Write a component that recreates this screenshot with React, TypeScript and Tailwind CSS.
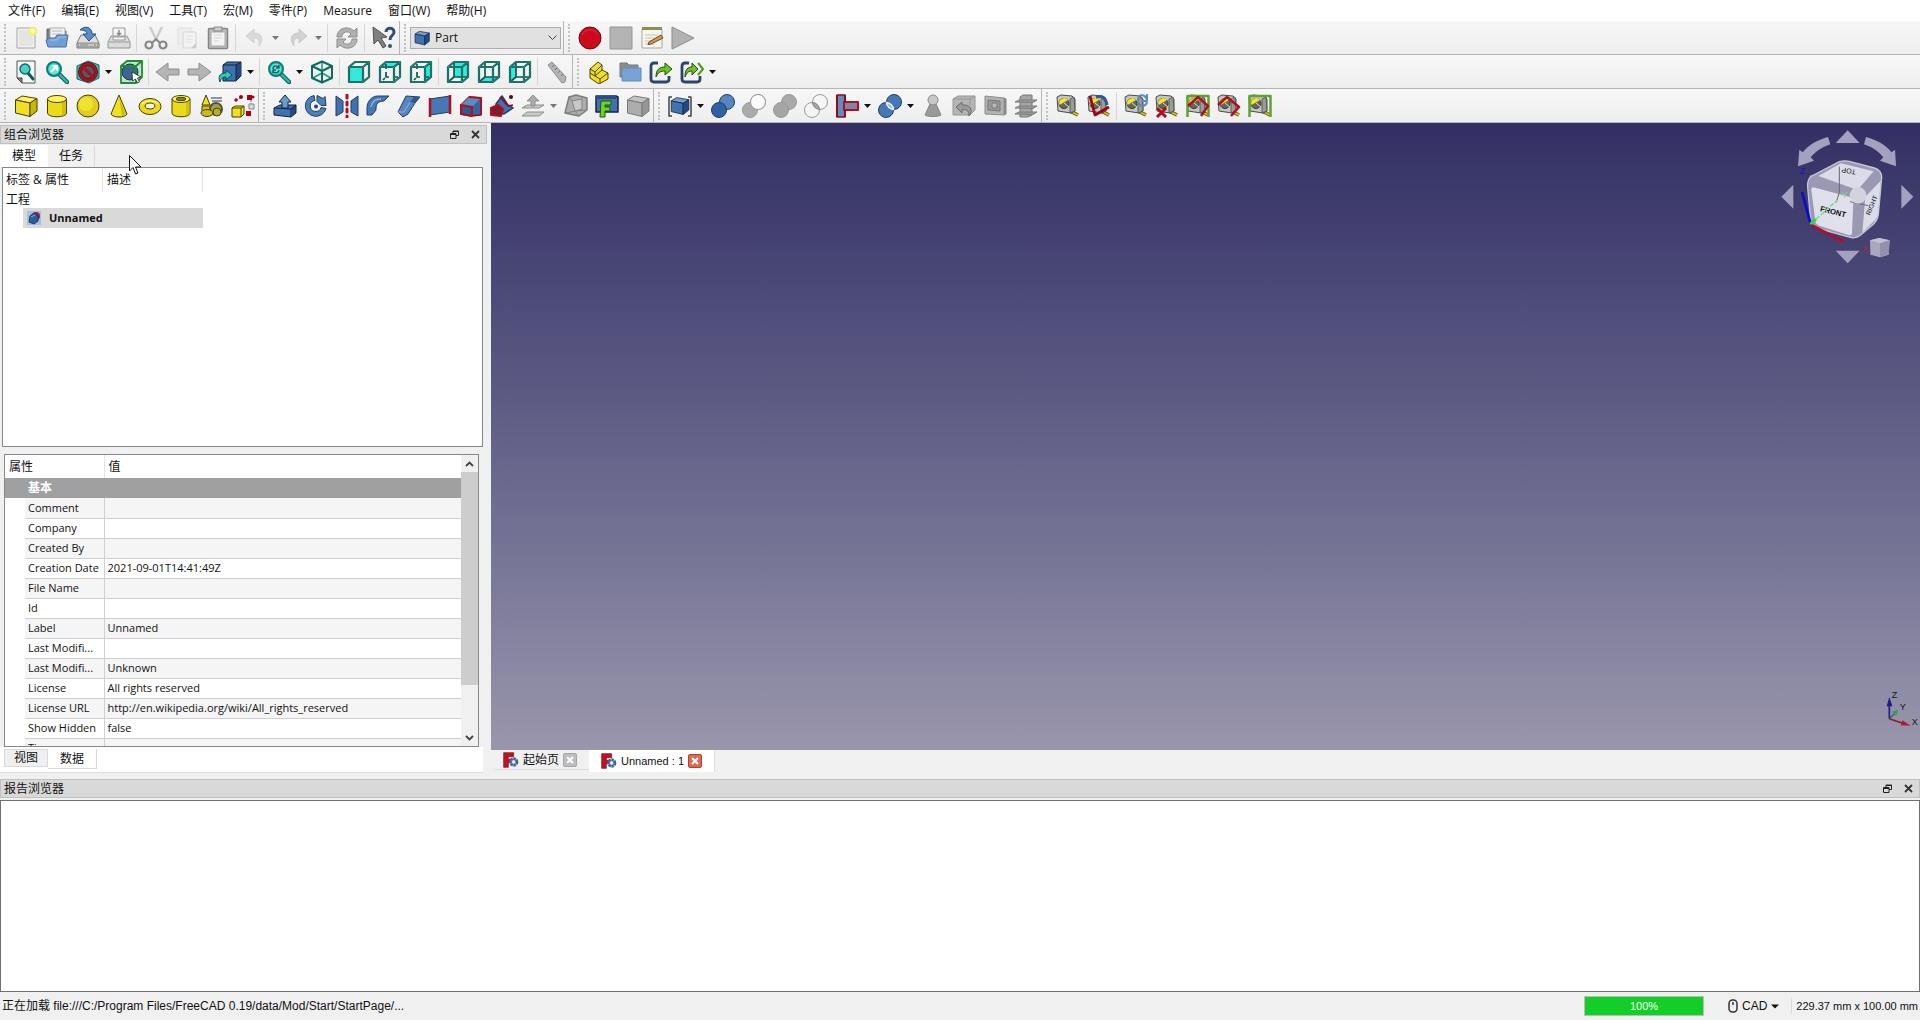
import type { ReactNode } from "react";

const BLUE = { top: "#729fcf", left: "#3f72ae", right: "#204a87", line: "#14253c" };
const YELLOW = { top: "#fff35c", left: "#efe025", right: "#c9b700", line: "#4a4200" };
const GRAY = { top: "#c4c4c4", left: "#adadad", right: "#969696", line: "#7a7a7a" };
type Palette = typeof BLUE;

function Icon({ children, size = 24 }: { children: ReactNode; size?: number }) {
  return (
    <svg aria-hidden="true" width={size} height={size} viewBox="0 0 24 24" fill="none" strokeLinejoin="round">
      {children}
    </svg>
  );
}

function Box({ c }: { c: Palette }) {
  return (
    <g stroke={c.line}>
      <path d="M1.500 6 8 2l15 2.500-7 4.500z" fill={c.top} />
      <path d="M1.500 6 16 9v13.500L1.500 19z" fill={c.left} />
      <path d="M16 9 23 4.500V17l-7 5.500z" fill={c.right} />
    </g>
  );
}

const viewFaces = {
  front: "M2 7h14v15H2z",
  top: "M2 7l6-5h14l-6 5z",
  right: "M16 7l6-5v15l-6 5z",
  rear: "M8 2h14v15H8z",
  bottom: "M2 22l6-5h14l-6 5z",
  left: "M2 7l6-5v15l-6 5z",
};

function ViewCube({ face }: { face: keyof typeof viewFaces }) {
  const front = face === "front" || face === "top" || face === "right";
  return (
    <Icon>
      <path d={viewFaces[face]} fill="#34e8dc" />
      {face !== "front" && (
        <path
          d={front ? "M8 4v5M8 12v5h3M15 17h5M7 18l-2 2" : "M8 2v15h14M8 17l-6 5"}
          stroke="#0c5a52"
          strokeWidth="1.700"
        />
      )}
      <path d="M2 7l6-5h14v15l-6 5H2zM2 7h14v15M16 7l6-5" stroke="#0c5a52" strokeWidth="2.200" />
      <path d="M2 7l6-5h14v15l-6 5H2zM2 7h14v15M16 7l6-5" stroke="#35a392" strokeWidth=".700" />
    </Icon>
  );
}

function Magnifier({ children }: { children?: ReactNode }) {
  return (
    <>
      <path d="M13 13l9 9" stroke="#0b4f4b" strokeWidth="4.500" strokeLinecap="round" />
      <path d="M14 14l8 8" stroke="#22b8b0" strokeWidth="2.500" strokeLinecap="round" />
      <circle cx="9" cy="9" r="7" fill="#3ad0c6" stroke="#0b7d76" strokeWidth="2" />
      <circle cx="9" cy="9" r="5" fill="#6fe3dc" />
      {children}
    </>
  );
}

function Tape() {
  return (
    <>
      <path d="M14 17l8 4" stroke="#5b5200" strokeWidth="3.500" />
      <path d="M14 17l8 4" stroke="#d8ca1e" strokeWidth="1.800" />
      <path d="M1 3l4-2 11 1 3 3v12l-4 2-13-2z" fill="#c4c6bf" stroke="#4a4c48" />
      <path d="M14 5l4-2 1 14-5 2z" fill="#9a9c96" stroke="#4a4c48" strokeWidth=".8" />
      <circle cx="8" cy="9.500" r="5" fill="#66685f" stroke="#33342f" />
      <path d="M3.500 11a5 5 0 0 1 8.500-5z" fill="#f4e626" />
      <path d="M8 9l5 4" stroke="#ddd" />
    </>
  );
}

function Balls({ a, b, line }: { a: string; b: string; line: string }) {
  return (
    <g stroke={line}>
      <circle cx="16" cy="8" r="7.500" fill={b} />
      <circle cx="8" cy="16" r="7.500" fill={a} />
    </g>
  );
}

const newIcon = (
  <Icon>
    <path d="M3 2h18v20H3z" fill="#f1f1ef" stroke="#a6a6a2" />
    <path d="M5 4h14v16H5z" fill="#e4e4e1" />
    <circle cx="19" cy="5" r="4.500" fill="#fdf84a" opacity=".75" />
    <circle cx="19" cy="5" r="2" fill="#fffde0" />
  </Icon>
);
const openIcon = (
  <Icon>
    <path d="M2 3h6l2 2h11v8H2z" fill="#7c7e7b" stroke="#666" />
    <path d="M5 2h15v11H5z" fill="#f2f2f2" stroke="#aaa" />
    <path d="M7 5h10M7 8h10" stroke="#bbb" />
    <path d="M3 21 1 14l3-2h6l2-3h11l-2 12z" fill="#6f9fd4" stroke="#426fa5" />
    <path d="M5 14h7l2-3h7" stroke="#a5c5e8" />
  </Icon>
);
const saveIcon = (
  <Icon>
    <path d="M5 9h14l4 8v5H1v-5z" fill="#dededc" stroke="#777" />
    <path d="M2 17h20v4H2z" fill="#c5c5c3" stroke="#888" />
    <path d="M4 19h8M18 19h2" stroke="#888" />
    <path d="M4 4c5-5 12-3 12 4h4l-7 7-6-7h4c0-3-3-4-7-4z" fill="#5b8cc4" stroke="#245086" />
  </Icon>
);
const printIcon = (
  <Icon>
    <path d="M6 2h12v11H6z" fill="#f4f4f4" stroke="#999" />
    <path d="M12 4v4M10 7l2 2 2-2" stroke="#888" strokeWidth="1.500" />
    <path d="M4 10h16l3 6v6H1v-6z" fill="#dadada" stroke="#969696" />
    <path d="M2 16h20M6 11h12v3H6z" fill="#f5f5f5" stroke="#999" />
  </Icon>
);
const cutIcon = (
  <Icon>
    <path d="M6 1l7 14M18 1l-7 14" stroke="#cdcdcd" strokeWidth="2.500" />
    <ellipse cx="5" cy="19" rx="3.500" ry="3.500" stroke="#888" strokeWidth="2.200" />
    <ellipse cx="19" cy="19" rx="3.500" ry="3.500" stroke="#888" strokeWidth="2.200" />
    <path d="M8 17l4-4 4 4" stroke="#888" strokeWidth="2" />
  </Icon>
);
const copyIcon = (
  <Icon>
    <path d="M3 2h14v16H3z" fill="#eee" stroke="#e0e0e0" />
    <path d="M8 6h13v16H8z" fill="#f3f3f3" stroke="#d5d5d5" />
    <path d="M11 10h7M11 13h7M11 16h5" stroke="#e0e0e0" />
    <path d="M16 22l5-5v5z" fill="#ccc" />
  </Icon>
);
const pasteIcon = (
  <Icon>
    <rect x="2.500" y="2.500" width="19" height="20" rx="1" fill="#bdbdbd" stroke="#858585" strokeWidth="1.500" />
    <path d="M5 6h14v14H5z" fill="#f3f3f3" stroke="#aaa" />
    <path d="M8 1h8v4H8z" fill="#ccc" stroke="#888" />
    <path d="M8 9h8M8 12h8M8 15h5" stroke="#d4d4d4" />
  </Icon>
);
const undoPath = "M3 10l8-7v4c8 0 10 6 5 13 1-6-1-8-5-8v5z";
const undoIcon = (
  <Icon>
    <path d={undoPath} fill="#dadada" stroke="#d0d0d0" />
  </Icon>
);
const redoIcon = (
  <Icon>
    <path d={undoPath} fill="#d2d2d2" stroke="#c8c8c8" transform="matrix(-1 0 0 1 24 0)" />
  </Icon>
);
const refreshIcon = (
  <Icon>
    <path d="M2 11C2 2 13-1 19 5l3-3v9h-9l3-3C13 4 7 6 7 11z" fill="#b0b0b0" stroke="#8c8c8c" />
    <path d="M22 13c0 9-11 12-17 6l-3 3v-9h9l-3 3c3 4 9 2 9-3z" fill="#b5b5b5" stroke="#8c8c8c" />
  </Icon>
);
const whatsThisIcon = (
  <Icon>
    <path d="M1 1l14 10-6 1 5 8-3 2-5-8-4 4z" fill="#808080" stroke="#505050" />
    <path d="M14 6c0-5 8-5 8 0 0 4-4 3-4 8" stroke="#34506f" strokeWidth="3" />
    <circle cx="18" cy="20" r="2" fill="#34506f" />
  </Icon>
);
const recordIcon = (
  <Icon>
    <circle cx="12" cy="12" r="11" fill="#cc0a1e" stroke="#6d0913" />
    <path d="M4 9c3-7 13-7 16 0" stroke="#d9202f" strokeWidth="1.500" />
  </Icon>
);
const stopIcon = (
  <Icon>
    <path d="M1 1h22v22H1z" fill="#b4b4b4" stroke="#959595" />
  </Icon>
);
const editIcon = (
  <Icon>
    <path d="M2 3h20v19H2z" fill="#f6f5ee" stroke="#a9a896" />
    <path d="M2 1h20v3H2z" fill="#8f8a4f" />
    <path d="M5 9h13M5 12h10M5 15h7M5 18h9" stroke="#c3c3bb" />
    <path d="M9 16l12-7 2 3-12 6-3 .500z" fill="#d79a55" stroke="#6a4726" />
  </Icon>
);
const playIcon = (
  <Icon>
    <path d="M1 1l22 11L1 23z" fill="#b2b2b2" stroke="#8b8b8b" />
  </Icon>
);

const fitAllIcon = (
  <Icon>
    <path d="M3 1h18v22H8l-5-5z" fill="#f7f7f7" stroke="#555" />
    <path d="M3 18h5v5z" fill="#888" stroke="#444" />
    <path d="M14 13l5 6" stroke="#0b5f5a" strokeWidth="3" strokeLinecap="round" />
    <circle cx="11" cy="9" r="5" fill="#48d3ca" stroke="#0b6d67" strokeWidth="1.500" />
  </Icon>
);
const fitSelectionIcon = (
  <Icon>
    <Magnifier>
      <path d="M6 12l5-5M7.500 6H12v4.500" stroke="#fff" strokeWidth="2" />
    </Magnifier>
  </Icon>
);
const drawStyleIcon = (
  <Icon>
    <path d="M1 6l11-5 11 4v13l-10 5-12-4z" fill="#35bdb5" stroke="#0b6d67" />
    <circle cx="12" cy="12" r="8" fill="#4f5b5b" stroke="#6d0913" strokeWidth="4" />
    <circle cx="12" cy="12" r="8" stroke="#a91020" strokeWidth="2.500" />
    <path d="M6.500 6.500l11 11" stroke="#a91020" strokeWidth="3" />
  </Icon>
);
const boundingIcon = (
  <Icon>
    <path d="M2 6l6-5h15v16l-6 6H2z" fill="#c6e0d6" />
    <circle cx="11" cy="12" r="8" fill="#3d6492" stroke="#1b3554" />
    <path d="M2 6h15v17H2zM2 6l6-5h15l-6 5M23 1v16l-6 6" stroke="#1b8f2b" strokeWidth="1.800" />
    <path d="M13 12l9 5-3.500 1 2 4-2 1-2-4-3 2z" fill="#fff" stroke="#222" strokeWidth=".8" />
  </Icon>
);
const arrowD = "M0 12L12 3v6h11v6H12v6z";
const backIcon = (
  <Icon>
    <path d={arrowD} fill="#b5b5b5" stroke="#8d8d8d" />
  </Icon>
);
const forwardIcon = (
  <Icon>
    <path d={arrowD} fill="#b5b5b5" stroke="#8d8d8d" transform="rotate(180 12 12)" />
  </Icon>
);
const linkGoIcon = (
  <Icon>
    <path d="M5 5l4-3h14v14l-5 5H5z" fill="#3f72ae" stroke="#13233a" />
    <path d="M18 5l5-3v14l-5 5z" fill="#234a80" />
    <path d="M5 5h13v15M18 5l5-3" stroke="#13233a" />
    <path d="M2 22c-3-7 2-9 6-9v-3l6 5-6 5v-3c-3 0-5 1-6 5z" fill="#35c8c0" stroke="#0c4f4b" />
  </Icon>
);
const syncViewIcon = (
  <Icon>
    <Magnifier>
      <path d="M6 9c0-4 5-4 6-1M12 5v3H9M12 10c0 3-5 4-6 1M6 13v-3h3" stroke="#0d6660" strokeWidth="1.400" />
    </Magnifier>
  </Icon>
);
const isoIcon = (
  <Icon>
    <path d="M12 1.500 22 6v12l-10 4.500L2 18V6z" fill="#e8f4f2" />
    <path d="M12 2v11M12 13l-9 5M12 13l9 5" stroke="#2f8f83" strokeWidth="1.500" />
    <path d="M12 1.500 22 6v12l-10 4.500L2 18V6zM2 6l10 5 10-5M12 11v11" stroke="#0f6a60" strokeWidth="2" />
  </Icon>
);
const rulerIcon = (
  <Icon>
    <path d="M3 5l4-3 14 15-1 5-3 1z" fill="#b3b3b3" stroke="#8c8c8c" />
    <path d="M9 5L7 7M12 8l-2 2M15 11l-2 2M18 14l-2 2" stroke="#777" />
  </Icon>
);
const partIcon = (
  <Icon>
    <path d="M3 9l8-7 4 3v5l6 3v6l-9 5-9-6z" fill="#efe121" stroke="#4a4200" />
    <path d="M3 9l5 3 7-7M8 12v4l5 3 8-6M3 13l5 3M13 19v4M8 16l7-6" stroke="#4a4200" />
  </Icon>
);
const groupIcon = (
  <Icon>
    <path d="M2 3h7l2 2h9v12H2z" fill="#8c8e8b" stroke="#777" />
    <path d="M4 8h19v13H4z" fill="#78a3d6" stroke="#5f8cc0" />
  </Icon>
);
const linkBox = <path d="M9 3H5C3 3 2 4 2 6v13c0 2 1 3 3 3h12c2 0 3-1 3-3v-3" stroke="#2b4668" strokeWidth="2.800" />;
const linkIcon = (
  <Icon>
    {linkBox}
    <path d="M7 17c0-8 4-10 9-10V3l7 6-7 6v-4c-4 0-7 1-9 6z" fill="#6cc225" stroke="#234f08" />
  </Icon>
);
const linkMoreIcon = (
  <Icon>
    {linkBox}
    <path d="M5 17c0-8 3-10 7-10V3l6 6-6 6v-4c-3 0-5 1-7 6z" fill="#6cc225" stroke="#234f08" />
    <path d="M18 3l5 6-5 6" stroke="#4b9c17" strokeWidth="2" />
  </Icon>
);

const cylinderIcon = (
  <Icon>
    <path d="M2.500 5v14c0 5 19 5 19 0V5" fill="#e9da1c" stroke="#4a4200" />
    <path d="M17 8v14l4-2V6z" fill="#c4b000" opacity=".6" />
    <ellipse cx="12" cy="5" rx="9.500" ry="3.500" fill="#fff35c" stroke="#4a4200" />
  </Icon>
);
const sphereIcon = (
  <Icon>
    <circle cx="12" cy="12" r="11" fill="#dfcf1c" stroke="#4a4200" />
    <circle cx="10" cy="10" r="7" fill="#f8ea3c" opacity=".7" />
  </Icon>
);
const coneIcon = (
  <Icon>
    <path d="M12 1l8 19c-2 4-14 4-16 0z" fill="#efe121" stroke="#4a4200" />
    <path d="M12 3l7 17-4 2z" fill="#b8a600" opacity=".6" />
  </Icon>
);
const torusIcon = (
  <Icon>
    <ellipse cx="12" cy="12.500" rx="11" ry="8" fill="#e9da1c" stroke="#4a4200" />
    <ellipse cx="12" cy="12" rx="5" ry="3" fill="#f2f2f2" stroke="#4a4200" />
    <path d="M4 10c3-4 13-4 16 0" stroke="#fff67e" strokeWidth="1.500" />
  </Icon>
);
const tubeIcon = (
  <Icon>
    <path d="M3 5v14c0 5 18 5 18 0V5" fill="#e9da1c" stroke="#4a4200" />
    <path d="M17 8v14l4-2V6z" fill="#c4b000" opacity=".6" />
    <ellipse cx="12" cy="5" rx="9" ry="3.500" fill="#fff35c" stroke="#4a4200" />
    <ellipse cx="12" cy="5" rx="5" ry="1.700" fill="#8d7f00" stroke="#4a4200" />
  </Icon>
);
const primitivesIcon = (
  <Icon>
    <path d="M6 1l4 10H2z" fill="#efe121" stroke="#4a4200" />
    <path d="M11 4h11M12 7h10" stroke="#8b95a3" strokeWidth="2" />
    <path d="M2 12h10v8H2z" fill="#d3c41a" stroke="#4a4200" />
    <circle cx="16" cy="15" r="6" fill="#a7a04a" stroke="#55542a" strokeWidth="2" />
    <ellipse cx="7" cy="19" rx="6" ry="3.500" fill="#c9bb1c" stroke="#4a4200" />
    <circle cx="17" cy="18" r="4" fill="#b5ab3a" stroke="#4a4200" />
  </Icon>
);
const shapeBuilderIcon = (
  <Icon>
    <path d="M1 14l3-2h9v8l-3 3H1z" fill="#efe121" stroke="#4a4200" />
    <path d="M1 14h9v9M10 14l3-2" stroke="#4a4200" />
    <path d="M5 6l6-3M16 3h6M20 6v8M15 18l5 2" stroke="#777" strokeDasharray="2 1" />
    <g fill="#a40010">
      <circle cx="5" cy="6" r="1.700" />
      <circle cx="10" cy="3" r="2" />
      <path d="M16 1h5v5h-5zM15 17h5v5h-5z" />
      <circle cx="22" cy="3" r="1.500" />
    </g>
    <path d="M18 10h5v5h-5z" fill="#ddd" stroke="#888" />
  </Icon>
);
const extrudeIcon = (
  <Icon>
    <path d="M1 14l6-3h16l-5 4v8L1 21z" fill="#3f72ae" stroke="#14253c" />
    <path d="M18 15l5-4v8l-5 4z" fill="#234a80" />
    <path d="M1 14l17 1 5-4v8l-5 4" stroke="#14253c" />
    <path d="M12 1l6 7h-3v6H9V8H6z" fill="#6b9acf" stroke="#14253c" />
  </Icon>
);
const revolveIcon = (
  <Icon>
    <path d="M10 1.500a10.500 10.500 0 1 0 12 13l-5-1a5.500 5.500 0 1 1-6-7z" fill="#4d7fb9" stroke="#203e66" />
    <path d="M13 1.500l6 3 2-2 1 9h-5l-4-4z" fill="#4d7fb9" stroke="#203e66" />
    <circle cx="12" cy="12.500" r="2" fill="#28456b" />
  </Icon>
);
const mirrorIcon = (
  <Icon>
    <path d="M1 2l7 5v11l-7 4zM23 2l-7 5v11l7 4z" fill="#3f72ae" stroke="#203e66" />
    <path d="M12 1v24" stroke="#b0101e" strokeWidth="3" strokeDasharray="3 4" strokeLinecap="round" />
  </Icon>
);
const filletIcon = (
  <Icon>
    <path d="M1 21v-7C1 7 6 2 12 2h11l-5 5c-6 0-8 3-8 8v1l-4 5z" fill="#4578b4" stroke="#203e66" />
    <path d="M5 13c1-6 5-8 10-8" stroke="#8eb4de" strokeWidth="1.500" />
  </Icon>
);
const chamferIcon = (
  <Icon>
    <path d="M1 18 9 2l14 1-5 6-7 11-5 3z" fill="#5586c0" stroke="#203e66" />
    <path d="M13 8l4-5 6 0-5 6z" fill="#31598f" />
    <path d="M1 18h6l6-10" stroke="#8eb4de" />
  </Icon>
);
const ruledIcon = (
  <Icon>
    <path d="M2 5l20-3v16L2 21z" fill="#4578b4" stroke="#203e66" />
    <path d="M2 4v19M22 1v19" stroke="#b0101e" strokeWidth="2.500" />
  </Icon>
);
const loftIcon = (
  <Icon>
    <path d="M2 11l8-8 12 1v17l-10 1-10-2z" fill="#3465a4" stroke="#8f0c19" strokeWidth="1.500" />
    <path d="M10 3l11 2-8 8-11-2z" fill="#5b8cc4" />
    <path d="M2 11l11 2v9l-11-2z" fill="#31598f" stroke="#b0101e" strokeWidth="2" />
    <path d="M10 3l12 1v17" stroke="#b0101e" strokeWidth="2" />
  </Icon>
);
const sweepIcon = (
  <Icon>
    <path d="M6 10l6-8 6 9 5 3-9 6-9-2z" fill="#3f72ae" stroke="#203e66" strokeWidth="1.500" />
    <path d="M1 14l7-3 5 4-2 7-10-1z" fill="#7e1c33" stroke="#b0101e" strokeWidth="2" />
    <circle cx="21" cy="3" r="2" fill="#4d0a12" />
    <path d="M10 3l8 9 5-1" stroke="#a40010" strokeWidth="1.500" />
  </Icon>
);
const offsetIcon = (
  <Icon>
    <path d="M1 22l5-4h17l-5 4zM1 14l5-3h17l-5 3z" fill="#c9c9c9" stroke="#8f8f8f" />
    <path d="M12 1l6 6h-4v5h-4V7H6z" fill="#acacac" stroke="#8f8f8f" />
  </Icon>
);
const thicknessIcon = (
  <Icon>
    <path d="M1 19 5 3l7-2 11 3v12l-8 6z" fill="#adadad" stroke="#7c7c7c" strokeWidth="1.500" />
    <path d="M8 7l10-2v10l-7 2z" fill="#c8c8c8" stroke="#838383" />
    <path d="M2 19l9-2 4 5M11 17l11-1M5 3l3 4" stroke="#838383" />
  </Icon>
);
const projectionIcon = (
  <Icon>
    <path d="M1 2h20l2 1v15H1z" fill="#3f72ae" stroke="#14253c" strokeWidth="1.500" />
    <path d="M1 2h20v3H1z" fill="#284f85" />
    <path d="M6 7h10v4h-6v2h5v4h-5v6H5z" fill="#6cd327" stroke="#245408" />
  </Icon>
);
const compoundIcon = (
  <Icon>
    <g transform="translate(2 2) scale(.82)">
      <Box c={BLUE} />
    </g>
    <path d="M4 3H1v19h3M20 3h3v19h-3" stroke="#444" strokeWidth="1.500" />
  </Icon>
);
const lens = "M8.500 8.500a7.500 7.500 0 0 1 7 7a7.500 7.500 0 0 1-7-7z";
const intersectionIcon = (
  <Icon>
    <circle cx="16" cy="8" r="7.500" stroke="#999" fill="#f6f6f6" />
    <circle cx="8" cy="16" r="7.500" stroke="#999" fill="#f6f6f6" fillOpacity=".6" />
    <path d={lens} fill="#a5a5a5" stroke="#888" />
  </Icon>
);
const joinIcon = (
  <Icon>
    <path d="M2 1h8v22H2z" fill="#5f8dbd" stroke="#8f0c19" strokeWidth="1.500" />
    <path d="M9 8h14v8H9z" fill="#7b88a8" stroke="#b0101e" strokeWidth="2" />
    <path d="M2 1v22M10 1v7M10 16v7" stroke="#8f0c19" strokeWidth="2" />
  </Icon>
);
const splitIcon = (
  <Icon>
    <Balls a="#4578b4" b="#4578b4" line="#203e66" />
    <path d={lens} fill="#9dbde0" stroke="#eef" strokeWidth="1.500" />
  </Icon>
);
const checkGeometryIcon = (
  <Icon>
    <path d="M9 10h6l5 11c-3 2-13 2-16 0z" fill="#999" stroke="#868686" />
    <circle cx="12" cy="6" r="5" fill="#c8c8c8" stroke="#8b8b8b" />
  </Icon>
);
const defeatureIcon = (
  <Icon>
    <path d="M1 5l5-3h17v14l-5 5H1z" fill="#b5b5b5" stroke="#959595" />
    <path d="M1 5h17v6M18 5l5-3" stroke="#959595" />
    <path d="M4 13l6-5v3c8-1 12 5 7 11 0-6-3-7-7-6v3z" fill="#9a9a9a" stroke="#6b6b6b" />
  </Icon>
);
const sectionIcon = (
  <Icon>
    <path d="M2 2l19 2v17L2 20z" fill="#b3b3b3" stroke="#8c8c8c" />
    <path d="M5 6l12 1v10L5 16z" fill="#999" stroke="#777" />
    <path d="M9 9h5v5H9z" fill="#b9b9b9" stroke="#777" />
    <path d="M21 4l2 1v15l-2 1" fill="#8c8c8c" stroke="#868686" />
  </Icon>
);
const crossSectionsIcon = (
  <Icon>
    <path d="M6 3l3-2h9v20l-4 2H6z" fill="#a5a5a5" stroke="#777" />
    <path d="M1 8l4-2h18l-4 2.500zM1 14l4-2h18l-4 2.500zM1 20l4-2h18l-4 2.500z" fill="#9b9b9b" stroke="#7c7c7c" />
  </Icon>
);
const measureAngularIcon = (
  <Icon>
    <Tape />
    <path d="M9 3c7-2 10 2 11 8" stroke="#2c5a94" strokeWidth="3" />
    <path d="M3 2l5 19 14-8" stroke="#a40010" strokeWidth="2.800" />
  </Icon>
);
const measureRefreshIcon = (
  <Icon>
    <Tape />
    <path d="M14 6c0-6 6-6 8-2l1-3v6h-5M23 8c-1 5-7 5-9 1" stroke="#5c88bd" strokeWidth="2" />
  </Icon>
);
const measureClearIcon = (
  <Icon>
    <Tape />
    <path d="M2 14l9 9M11 14l-9 9" stroke="#b0101e" strokeWidth="3" />
  </Icon>
);
const measureAllIcon = (
  <Icon>
    <Tape />
    <path d="M1.500 23V2h21v21" stroke="#5fa32c" strokeWidth="2.500" />
    <path d="M2 12 12 3l10 9-7 10" stroke="#b0101e" strokeWidth="2.500" />
  </Icon>
);
const measure3dIcon = (
  <Icon>
    <Tape />
    <path d="M1 11 10 3l12 10-8 9" stroke="#b0101e" strokeWidth="2.500" />
  </Icon>
);
const measureDeltaIcon = (
  <Icon>
    <Tape />
    <path d="M1.500 23V2h21v21" stroke="#5fa32c" strokeWidth="2.500" />
  </Icon>
);
const freecadIcon = (
  <Icon size={16}>
    <path d="M1 1h15v6H8v4h6v5H8v7H1z" fill="#c4101f" stroke="#7d0a16" />
    <circle cx="16" cy="15" r="5" fill="#6f9bcf" stroke="#3d6597" strokeWidth="4" strokeDasharray="3.500 1" />
    <circle cx="16" cy="15" r="2.500" fill="#eef" />
  </Icon>
);

type Tool = { icon: ReactNode; label: string; menu?: boolean; off?: boolean } | "sep";

const fileTools: Tool[] = [
  { icon: newIcon, label: "New" },
  { icon: openIcon, label: "Open" },
  { icon: saveIcon, label: "Save" },
  { icon: printIcon, label: "Print" },
  "sep",
  { icon: cutIcon, label: "Cut" },
  { icon: copyIcon, label: "Copy" },
  { icon: pasteIcon, label: "Paste" },
  "sep",
  { icon: undoIcon, label: "Undo", menu: true, off: true },
  { icon: redoIcon, label: "Redo", menu: true, off: true },
  "sep",
  { icon: refreshIcon, label: "Refresh" },
  "sep",
  { icon: whatsThisIcon, label: "What's This" },
];

const macroTools: Tool[] = [
  { icon: recordIcon, label: "Record macro" },
  { icon: stopIcon, label: "Stop macro" },
  { icon: editIcon, label: "Macros" },
  { icon: playIcon, label: "Execute macro" },
];

const viewTools: Tool[] = [
  { icon: fitAllIcon, label: "Fit all" },
  { icon: fitSelectionIcon, label: "Fit selection" },
  { icon: drawStyleIcon, label: "Draw style", menu: true },
  { icon: boundingIcon, label: "Bounding box" },
  "sep",
  { icon: backIcon, label: "Go back" },
  { icon: forwardIcon, label: "Go forward" },
  { icon: linkGoIcon, label: "Go to linked object", menu: true },
  "sep",
  { icon: syncViewIcon, label: "Sync view", menu: true },
  { icon: isoIcon, label: "Isometric" },
  "sep",
  { icon: <ViewCube face="front" />, label: "Front" },
  { icon: <ViewCube face="top" />, label: "Top" },
  { icon: <ViewCube face="right" />, label: "Right" },
  "sep",
  { icon: <ViewCube face="rear" />, label: "Rear" },
  { icon: <ViewCube face="bottom" />, label: "Bottom" },
  { icon: <ViewCube face="left" />, label: "Left" },
  "sep",
  { icon: rulerIcon, label: "Measure distance" },
];

const structureTools: Tool[] = [
  { icon: partIcon, label: "Create part" },
  { icon: groupIcon, label: "Create group" },
  { icon: linkIcon, label: "Make link" },
  { icon: linkMoreIcon, label: "Link actions", menu: true },
];

const solidTools: Tool[] = [
  { icon: <Icon><Box c={YELLOW} /></Icon>, label: "Cube" },
  { icon: cylinderIcon, label: "Cylinder" },
  { icon: sphereIcon, label: "Sphere" },
  { icon: coneIcon, label: "Cone" },
  { icon: torusIcon, label: "Torus" },
  { icon: tubeIcon, label: "Tube" },
  { icon: primitivesIcon, label: "Primitives" },
  { icon: shapeBuilderIcon, label: "Shape builder" },
];

const partTools: Tool[] = [
  { icon: extrudeIcon, label: "Extrude" },
  { icon: revolveIcon, label: "Revolve" },
  { icon: mirrorIcon, label: "Mirror" },
  { icon: filletIcon, label: "Fillet" },
  { icon: chamferIcon, label: "Chamfer" },
  { icon: ruledIcon, label: "Ruled surface" },
  { icon: loftIcon, label: "Loft" },
  { icon: sweepIcon, label: "Sweep" },
  { icon: offsetIcon, label: "Offset", menu: true, off: true },
  { icon: thicknessIcon, label: "Thickness" },
  { icon: projectionIcon, label: "Projection on surface" },
  { icon: <Icon><Box c={GRAY} /></Icon>, label: "Color per face" },
];

const booleanTools: Tool[] = [
  { icon: compoundIcon, label: "Compound", menu: true },
  { icon: <Icon><Balls a="#2f62a3" b="#5586c0" line="#203e66" /></Icon>, label: "Boolean" },
  { icon: <Icon><Balls a="#aaa" b="#aaa" line="#999" /><circle cx="16" cy="8" r="7.500" fill="#fafafa" stroke="#999" /></Icon>, label: "Cut shapes" },
  { icon: <Icon><Balls a="#a5a5a5" b="#a9a9a9" line="#999" /></Icon>, label: "Union" },
  { icon: intersectionIcon, label: "Intersection" },
  { icon: joinIcon, label: "Join", menu: true },
  { icon: splitIcon, label: "Split", menu: true },
  { icon: checkGeometryIcon, label: "Check geometry" },
  { icon: defeatureIcon, label: "Defeaturing" },
  { icon: sectionIcon, label: "Section" },
  { icon: crossSectionsIcon, label: "Cross-sections" },
];

const measureTools: Tool[] = [
  { icon: <Icon><Tape /></Icon>, label: "Measure linear" },
  { icon: measureAngularIcon, label: "Measure angular" },
  "sep",
  { icon: measureRefreshIcon, label: "Refresh measurements" },
  { icon: measureClearIcon, label: "Clear measurements" },
  { icon: measureAllIcon, label: "Toggle all" },
  { icon: measure3dIcon, label: "Toggle 3D" },
  { icon: measureDeltaIcon, label: "Toggle delta" },
];

const menus = ["文件(F)", "编辑(E)", "视图(V)", "工具(T)", "宏(M)", "零件(P)", "Measure", "窗口(W)", "帮助(H)"];

const properties = [
  ["Comment", ""],
  ["Company", ""],
  ["Created By", ""],
  ["Creation Date", "2021-09-01T14:41:49Z"],
  ["File Name", ""],
  ["Id", ""],
  ["Label", "Unnamed"],
  ["Last Modifi...", ""],
  ["Last Modifi...", "Unknown"],
  ["License", "All rights reserved"],
  ["License URL", "http://en.wikipedia.org/wiki/All_rights_reserved"],
  ["Show Hidden", "false"],
  ["Tip", ""],
];

function Toolbar({ tools, children, last }: { tools?: Tool[]; children?: ReactNode; last?: boolean }) {
  return (
    <div role="toolbar" className={`flex items-center ${last ? "" : "border-r border-[#b5b5b5]"}`}>
      <span className="mr-1 ml-1 h-7 border-l-2 border-dotted border-[#c2c2c2]" />
      {children}
      {tools?.map((tool, i) =>
        tool === "sep" ? (
          <span key={i} className="mr-[3px] ml-[2px] h-7 w-px bg-[#d6d6d6]" />
        ) : (
          <button key={i} type="button" aria-label={tool.label} className="flex h-8 items-center">
            <span className="grid w-[31px] place-items-center">{tool.icon}</span>
            {tool.menu && (
              <svg width="12" height="6" viewBox="0 0 12 6" aria-hidden="true">
                <path d="M2 1h7L5.500 5z" fill={tool.off ? "#777" : "#111"} />
              </svg>
            )}
          </button>
        ),
      )}
    </div>
  );
}

function ToolbarRow({ children }: { children: ReactNode }) {
  return (
    <div className="flex h-[34px] shrink-0 border-b border-[#b5b5b5] bg-linear-to-b from-[#f7f7f7] to-[#eeeeee]">
      {children}
    </div>
  );
}

function DockTitle({ title }: { title: string }) {
  return (
    <div className="flex h-[19px] shrink-0 items-center border border-[#c0c0c0] bg-[#d9d9d9] pr-[6px] pl-[3px]">
      <h2 className="flex-1">{title}</h2>
      <button type="button" aria-label="Float" className="mr-3">
        <svg width="9" height="9" viewBox="0 0 9 9" fill="none" stroke="#222">
          <path d="M3 3V1h5.500v4.500H6M3 1.500h5.500M.500 3.500H6v5H.500zM.500 4.500H6" />
        </svg>
      </button>
      <button type="button" aria-label="Close">
        <svg width="9" height="9" viewBox="0 0 9 9" fill="none" stroke="#333" strokeWidth="1.800">
          <path d="M1 1l7 7M8 1L1 8" />
        </svg>
      </button>
    </div>
  );
}

function ModelTree() {
  return (
    <div className="mx-[2px] h-[280px] shrink-0 border border-[#828790] bg-white">
      <div className="flex h-6 items-center">
        <span className="w-[100px] border-r border-[#e5e5e5] pl-[3px] leading-6">标签 &amp; 属性</span>
        <span className="w-[100px] border-r border-[#e5e5e5] pl-1 leading-6">描述</span>
      </div>
      <div className="h-4 pl-[3px] leading-4">工程</div>
      <div className="ml-5 flex h-5 w-[180px] items-center gap-2 bg-[#d9d9d9] pl-1 text-[11px] font-bold">
        <svg width="14" height="14" viewBox="0 0 14 14" aria-hidden="true">
          <path d="M0 0h14v14H0z" fill="#a9c0dc" />
          <circle cx="9" cy="5" r="4" fill="#8f2247" />
          <path d="M3 5l4-3 4 3v5l-4 3-5-2z" fill="#2c5fa0" stroke="#173a69" />
          <path d="M4 6l4-2" stroke="#7fb0e0" />
        </svg>
        Unnamed
      </div>
    </div>
  );
}

function PropertyEditor() {
  return (
    <div className="mt-[7px] mr-[6px] ml-1 flex min-h-0 flex-1 border border-[#828790] bg-white">
      <div className="min-w-0 flex-1 overflow-hidden">
        <table className="w-full table-fixed border-collapse text-left">
          <colgroup>
            <col className="w-5" />
            <col className="w-[79px]" />
            <col />
          </colgroup>
          <thead>
            <tr className="h-[23px]">
              <th colSpan={2} className="border-r border-[#e5e5e5] pl-1 font-normal">属性</th>
              <th className="pl-1 font-normal">值</th>
            </tr>
          </thead>
          <tbody>
            <tr className="h-5 bg-[#a0a0a0] text-white">
              <td />
              <th colSpan={2} className="pl-[3px]">基本</th>
            </tr>
            {properties.map(([name, value], i) => (
              <tr key={i} className="h-5 text-[11px] leading-4">
                <td />
                <th
                  className={`border-r border-b border-[#d0d0d0] pl-[3px] font-normal whitespace-nowrap ${i % 2 ? "" : "bg-[#f5f5f5]"}`}
                >
                  {name}
                </th>
                <td className={`border-b border-[#d0d0d0] pl-[3px] ${i % 2 ? "" : "bg-[#f5f5f5]"}`}>{value}</td>
              </tr>
            ))}
          </tbody>
        </table>
      </div>
      <div className="flex w-[17px] flex-col bg-[#f0f0f0]">
        <button type="button" aria-label="Scroll up" className="grid h-[17px] place-items-center">
          <svg width="9" height="6" viewBox="0 0 9 6" fill="none" stroke="#444" strokeWidth="1.800">
            <path d="M1 5l3.500-3.500L8 5" />
          </svg>
        </button>
        <div className="flex-1">
          <div className="h-[83%] bg-[#cdcdcd]" />
        </div>
        <button type="button" aria-label="Scroll down" className="grid h-[17px] place-items-center">
          <svg width="9" height="6" viewBox="0 0 9 6" fill="none" stroke="#444" strokeWidth="1.800">
            <path d="M1 1l3.500 3.500L8 1" />
          </svg>
        </button>
      </div>
    </div>
  );
}

function NavigationCube() {
  return (
    <svg className="absolute top-0 right-0" width="160" height="152" viewBox="0 24 480 456" aria-label="Navigation cube">
      <g fill="#a3a1bd">
        <path d="M263 46l36 38h-72zM263 445l36-38h-72zM64 245l36-36v72zM460 245l-36-36v72z" />
        <path d="M204 66l7 22c-27 9-44 22-59 39l10 10-48 17 4-50 10 8c18-22 43-37 76-46zM318 66l-6 22c27 9 44 22 58 39l-10 10 48 17-3-50-10 8c-18-22-43-37-77-46z" />
      </g>
      <path d="M152 185l86-45c10-3 20-3 30-1l75 20c15 5 22 15 22 28l-10 112c-2 12-6 20-14 28l-40 34c-10 8-20 9-30 6l-96-26c-14-5-20-12-23-24l-9-100c-1-14 1-24 9-33z" fill="#9a99b1" stroke="#c7c6d6" strokeWidth="4" />
      <path d="M175 183l68-38 98 24-48 56z" fill="#dcdbe8" />
      <path d="M160 217l112 30c5 2 8 6 8 12l-4 94c0 6-4 9-10 7l-88-28c-8-3-11-8-12-14l-12-92c0-7 2-10 6-9z" fill="#e0e0ec" />
      <path d="M316 245l46-48-8 98c-1 8-4 15-9 20l-38 38z" fill="#dcdbe8" />
      <path d="M238 155v78l-10 30M270 260l55 12" stroke="#66667c" strokeWidth="3" fill="none" />
      <circle cx="294" cy="241" r="25" fill="#d3d3e0" />
      <g fill="#0d0d14" fontFamily="Liberation Sans, sans-serif">
        <text x="179" y="288" fontSize="23" fontWeight="bold" transform="rotate(14 179 288)">FRONT</text>
        <text x="288" y="164" fontSize="21" transform="rotate(188 288 164)">TOP</text>
        <text x="330" y="302" fontSize="20" transform="rotate(-68 330 302)">RIGHT</text>
      </g>
      <g fill="none" strokeWidth="8">
        <path d="M152 327L126 231" stroke="#0a0ad0" />
        <path d="M152 329l100 52" stroke="#b30d2c" />
        <path d="M150 327l18-14" stroke="#18e038" />
        <path d="M168 313l64-58" stroke="#7de08f" strokeWidth="5" strokeDasharray="14 5" />
      </g>
      <g fontFamily="Liberation Sans, sans-serif" fontSize="28">
        <text x="119" y="178" fill="#1414c8">Z</text>
        <text x="244" y="248" fill="#7de08f">Y</text>
        <text x="305" y="410" fill="#b3214a">X</text>
      </g>
      <path d="M330 376l28-7 31 7-3 43-26 8-29-8z" fill="#a9a8bf" />
      <path d="M330 376l28-7 31 7-29 9z" fill="#c2c1d3" />
      <path d="M360 385l29-9-3 43-26 8z" fill="#9291ac" />
    </svg>
  );
}

function AxisCross() {
  return (
    <svg className="absolute right-0 bottom-0" width="60" height="79" viewBox="0 0 180 237" aria-label="Axis cross">
      <path d="M88 143V95" stroke="#1c1c8c" strokeWidth="5" />
      <path d="M88 78l9 28H80z" fill="#1c1c8c" />
      <path d="M88 143l18-18" stroke="#2a6e4a" strokeWidth="4" />
      <path d="M114 116l-5 18-13-12z" fill="#2ba05c" />
      <path d="M88 143l38 13" stroke="#8c1c2c" strokeWidth="5" />
      <path d="M152 164l-30-1 5-15z" fill="#a8202e" />
      <g fill="#14141c" fontFamily="Liberation Sans, sans-serif" fontSize="27">
        <text x="95" y="82">Z</text>
        <text x="119" y="117">Y</text>
        <text x="155" y="163">X</text>
      </g>
    </svg>
  );
}

function TabClose({ active }: { active?: boolean }) {
  return (
    <button
      type="button"
      aria-label="Close tab"
      className={`grid size-[14px] place-items-center rounded-xs border ${active ? "border-[#a8452f] bg-[#dd6a50]" : "border-[#a5a5a5] bg-[#bdbdbd]"}`}
    >
      <svg width="8" height="8" viewBox="0 0 8 8" stroke="#fff" strokeWidth="2">
        <path d="M1 1l6 6M7 1L1 7" />
      </svg>
    </button>
  );
}

export default function App() {
  return (
    <div className="relative flex h-screen flex-col overflow-hidden bg-[#f0f0f0] font-['Open_Sans','Noto_Sans_CJK_SC',sans-serif] text-[12px] leading-4 text-[#111]">
      <nav className="flex h-[21px] shrink-0 items-center bg-white">
        {menus.map((menu) => (
          <button key={menu} type="button" className="px-2">
            {menu}
          </button>
        ))}
      </nav>

      <ToolbarRow>
        <Toolbar tools={fileTools} />
        <Toolbar>
          <label className="relative mr-[2px] block">
            <span className="sr-only">Workbench</span>
            <span className="absolute top-[3px] left-1">
              <Icon size={16}><Box c={BLUE} /></Icon>
            </span>
            <select className="block h-[22px] w-[151px] appearance-none border border-[#adadad] bg-[#e1e1e1] pl-6 leading-5">
              <option>Part</option>
            </select>
            <svg className="absolute top-2 right-1" width="9" height="6" viewBox="0 0 9 6" fill="none" stroke="#444">
              <path d="M.500.500l4 4 4-4" />
            </svg>
          </label>
        </Toolbar>
        <Toolbar tools={macroTools} last />
      </ToolbarRow>
      <ToolbarRow>
        <Toolbar tools={viewTools} />
        <Toolbar tools={structureTools} last />
      </ToolbarRow>
      <ToolbarRow>
        <Toolbar tools={solidTools} />
        <Toolbar tools={partTools} />
        <Toolbar tools={booleanTools} />
        <Toolbar tools={measureTools} last />
      </ToolbarRow>

      <main className="flex min-h-0 flex-1">
        <aside className="mr-1 flex w-[487px] shrink-0 flex-col pt-[2px]">
          <DockTitle title="组合浏览器" />
          <div className="flex h-[23px] shrink-0 items-end">
            <button type="button" className="h-[22px] bg-white px-3">模型</button>
            <button type="button" className="h-[22px] border-r border-[#d9d9d9] px-[11px]">任务</button>
          </div>
          <div className="mr-[2px] flex min-h-0 flex-1 flex-col">
            <ModelTree />
            <PropertyEditor />
            <div className="mr-[2px] flex h-[26px] shrink-0 items-start border-b border-[#dcdcdc] bg-white pt-[2px] pl-1">
              <button type="button" className="h-[18px] border border-[#d9d9d9] bg-[#f0f0f0] px-[9px]">视图</button>
              <button type="button" className="h-5 border-r border-b border-[#d9d9d9] bg-white px-3">数据</button>
            </div>
          </div>
        </aside>
        <section className="flex min-w-0 flex-1 flex-col">
          <div className="relative flex-1 bg-linear-to-b from-[#332f64] to-[#9996ac]">
            <NavigationCube />
            <AxisCross />
          </div>
          <div className="flex h-[23px] shrink-0 items-start pl-1 font-['Liberation_Sans','Noto_Sans_CJK_SC',sans-serif]">
            <div className="flex h-5 items-center gap-1 border-b border-[#dcdcdc] pr-3 pl-2">
              {freecadIcon}
              <button type="button">起始页</button>
              <TabClose />
            </div>
            <div className="flex h-[22px] items-center gap-1 border-r border-[#dcdcdc] bg-white px-3 text-[11px]">
              {freecadIcon}
              <button type="button">Unnamed : 1</button>
              <TabClose active />
            </div>
          </div>
        </section>
      </main>

      <section className="flex h-[219px] shrink-0 flex-col pt-[6px]">
        <DockTitle title="报告浏览器" />
        <textarea
          aria-label="报告浏览器"
          readOnly
          className="mt-[2px] block flex-1 resize-none border border-[#707070] bg-white outline-none"
        />
      </section>

      <footer className="flex h-7 shrink-0 items-center font-['Liberation_Sans','Noto_Sans_CJK_SC',sans-serif]">
        <p className="flex-1 pl-[2px]">正在加载 file:///C:/Program Files/FreeCAD 0.19/data/Mod/Start/StartPage/...</p>
        <div
          role="progressbar"
          aria-valuenow={100}
          className="mr-6 h-5 w-[120px] border border-[#bcbcbc] bg-[#12cf28] text-center text-[11px] leading-[18px] text-white"
        >
          100%
        </div>
        <button type="button" className="flex items-center gap-1 pr-3">
          <svg width="10" height="14" viewBox="0 0 10 14" fill="none" stroke="#333" strokeWidth="1.500">
            <rect x="1" y="1" width="8" height="12" rx="3.500" />
            <path d="M5 3v3" />
          </svg>
          CAD
          <svg width="8" height="5" viewBox="0 0 8 5">
            <path d="M0 .500h8L4 4.500z" fill="#111" />
          </svg>
        </button>
        <span className="border-l border-[#d9d9d9] pr-[2px] pl-1 text-[11px]">229.37 mm x 100.00 mm</span>
      </footer>

      <svg className="absolute top-[155px] left-[129px]" width="13" height="20" viewBox="0 0 13 20" aria-hidden="true">
        <path d="M.500.500v15.500l3.500-3.500 2.500 6.500 2.500-1-2.500-6H12z" fill="#fff" stroke="#111" />
      </svg>
    </div>
  );
}
